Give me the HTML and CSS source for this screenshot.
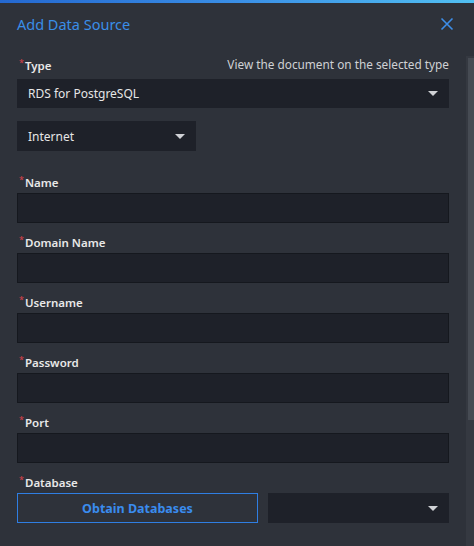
FILE: index.html
```html
<!DOCTYPE html>
<html>
<head>
<meta charset="utf-8">
<link rel="stylesheet" href="styles.css">
</head>
<body>
<div class="dialog">
  <div class="topbar"></div>
  <div class="header">
    <span class="title">Add Data Source</span>
    <svg class="close" width="14" height="14" viewBox="0 0 14 14"><path d="M1.5 1.5 L12.5 12.5 M12.5 1.5 L1.5 12.5" stroke="#3d8ee8" stroke-width="1.6" fill="none"/></svg>
  </div>
  <div class="body">
    <div class="form">
      <div class="type-row">
        <span class="label"><span class="req">*</span>Type</span>
        <span class="doc">View the document on the selected type</span>
      </div>
      <div class="select type-select"><span>RDS for PostgreSQL</span><span class="caret"></span></div>
      <div class="select net-select"><span>Internet</span><span class="caret"></span></div>
      <div class="field first">
        <div class="label"><span class="req">*</span>Name</div>
        <div class="input"></div>
      </div>
      <div class="field">
        <div class="label"><span class="req">*</span>Domain Name</div>
        <div class="input"></div>
      </div>
      <div class="field">
        <div class="label"><span class="req">*</span>Username</div>
        <div class="input"></div>
      </div>
      <div class="field">
        <div class="label"><span class="req">*</span>Password</div>
        <div class="input"></div>
      </div>
      <div class="field">
        <div class="label"><span class="req">*</span>Port</div>
        <div class="input"></div>
      </div>
      <div class="field">
        <div class="label"><span class="req">*</span>Database</div>
        <div class="db-row">
          <div class="btn">Obtain Databases</div>
          <div class="select db-select"><span></span><span class="caret"></span></div>
        </div>
      </div>
    </div>
    <div class="track"><div class="thumb"></div></div>
  </div>
</div>
</body>
</html>
```
FILE: styles.css
```css
html, body {
  margin: 0;
  padding: 0;
  background: #2e323a;
  font-family: "Noto Sans", "Open Sans", sans-serif;
}
.dialog {
  width: 474px;
  height: 546px;
  background: #2e323a;
  overflow: hidden;
  display: flex;
  flex-direction: column;
}
.topbar {
  height: 3px;
  background: linear-gradient(90deg, #2468d0 0%, #3a8fe6 50%, #52c0f2 100%);
}
.header {
  height: 53px;
  box-sizing: border-box;
  padding: 10px 20px 0 17px;
  display: flex;
  justify-content: space-between;
  align-items: flex-start;
}
.title {
  color: #3a8ee8;
  font-size: 14.5px;
  line-height: 22px;
}
.close {
  margin-top: 4px;
}
.body {
  flex: 1;
  display: flex;
}
.form {
  flex: 1;
  padding: 0 17px;
}
.track {
  width: 8px;
  background: #353941;
  display: flex;
  justify-content: flex-end;
  padding-top: 2px;
}
.thumb {
  width: 6px;
  height: 362px;
  background: #464b53;
}
.type-row {
  display: flex;
  justify-content: space-between;
  align-items: center;
  height: 16px;
}
.label {
  color: #e8e8e8;
  font-size: 11.5px;
  font-weight: 600;
  line-height: 16px;
  padding-left: 2px;
}
.req {
  color: #d8434b;
  font-size: 9px;
  font-weight: 400;
  vertical-align: 4px;
  margin-right: 1px;
}
.doc {
  color: #cfd1d4;
  font-size: 11.8px;
  line-height: 16px;
}
.select {
  background: #1e2129;
  height: 29px;
  box-sizing: border-box;
  display: flex;
  align-items: center;
  justify-content: space-between;
  padding: 0 11px 0 11px;
  color: #e6e6e6;
  font-size: 12px;
}
.type-select {
  margin-top: 7px;
}
.net-select {
  margin-top: 13px;
  width: 179px;
  height: 30px;
}
.caret {
  width: 0;
  height: 0;
  border-left: 5px solid transparent;
  border-right: 5px solid transparent;
  border-top: 5px solid #d0d2d6;
}
.field {
  margin-top: 10px;
}
.field.first {
  margin-top: 22px;
}
.field .label {
  height: 20px;
  line-height: 14px;
  box-sizing: border-box;
}
.input {
  height: 30px;
  box-sizing: border-box;
  background: #1e2129;
  border: 1px solid #15181e;
}
.db-row {
  display: flex;
  gap: 10px;
}
.btn {
  width: 241px;
  height: 30px;
  box-sizing: border-box;
  border: 1px solid #2f7ee2;
  color: #3a8cee;
  font-size: 12.5px;
  font-weight: 700;
  display: flex;
  align-items: center;
  justify-content: center;
}
.db-select {
  flex: 1;
  height: 30px;
}
```
